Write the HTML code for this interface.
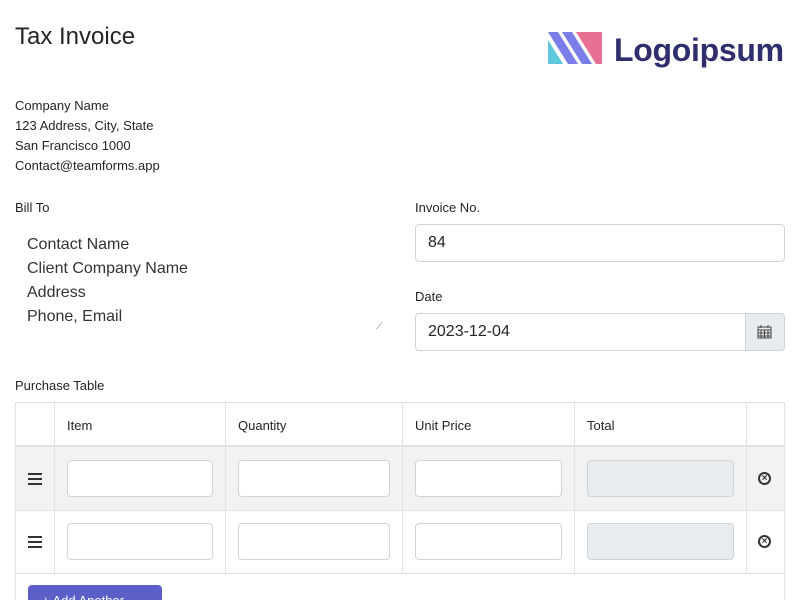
<!DOCTYPE html>
<html><head><style>
*{box-sizing:border-box;margin:0;padding:0}
html,body{width:800px;height:600px;overflow:hidden}
body{background:#fff;font-family:"Liberation Sans",sans-serif;color:#212529;position:relative}
.a{position:absolute}
.s{font-size:13px}
.inp{position:absolute;border:1px solid #ced4da;border-radius:4px;background:#fff;font-size:16px;padding-left:12px;line-height:35px}
.ri{position:absolute;height:37px;border:1px solid #ced4da;border-radius:4px;background:#fff}
.ham{position:absolute;width:14px;height:12px;border-top:2px solid #333;border-bottom:2px solid #333}
.ham:after{content:"";position:absolute;left:0;right:0;top:3px;border-top:2px solid #333}
.x{position:absolute;width:13px;height:13px;border:2px solid #333;border-radius:50%;font-size:10px;line-height:9px;text-align:center;font-weight:bold;color:#333}
</style></head><body>
<div class="a" style="left:15px;top:23px;font-size:24px">Tax Invoice</div>
<svg class="a" style="left:548px;top:32px" width="56" height="32" viewBox="0 0 56 32">
<polygon points="0,0 10,0 30,32 20,32" fill="#7b7de8"/>
<polygon points="0,8 15,32 0,32" fill="#5ec8dc"/>
<polygon points="14,0 24,0 44,32 34,32" fill="#7b7de8"/>
<polygon points="28,0 54,0 54,32 48,32" fill="#e86f94"/>
</svg>
<div class="a" style="left:614px;top:32px;font-size:32px;font-weight:bold;color:#2f2f6e;letter-spacing:-0.3px">Logoipsum</div>
<div class="a s" style="left:15px;top:96px;line-height:20px">Company Name<br>123 Address, City, State<br>San Francisco 1000<br>Contact@teamforms.app</div>
<div class="a s" style="left:15px;top:200px">Bill To</div>
<div class="a" style="left:27px;top:233px;font-size:16px;line-height:24px;color:#333">Contact Name<br>Client Company Name<br>Address<br>Phone, Email</div>
<div class="a" style="left:376px;top:321px;color:#777;font-size:9px">⟋</div>
<div class="a s" style="left:415px;top:200px">Invoice No.</div>
<div class="inp" style="left:415px;top:224px;width:370px;height:38px">84</div>
<div class="a s" style="left:415px;top:289px">Date</div>
<div class="inp" style="left:415px;top:313px;width:370px;height:38px">2023-12-04</div>
<div class="a" style="left:745px;top:313px;width:40px;height:38px;background:#e9ecef;border:1px solid #ced4da;border-radius:0 4px 4px 0"></div>
<svg class="a" style="left:757px;top:324px" width="15" height="15" viewBox="0 0 15 15" fill="none" stroke="#444" stroke-width="1"><rect x="1" y="3" width="13" height="11"/><path d="M1 6h13M1 9h13M1 12h13M4 6v8M7.5 6v8M11 6v8M4 1v3M11 1v3"/></svg>
<div class="a s" style="left:15px;top:378px">Purchase Table</div>
<div class="a" style="left:15px;top:402px;width:770px;height:198px;border:1px solid #dee2e6;border-bottom:0"></div>
<div class="a" style="left:16px;top:447px;width:768px;height:64px;background:#f2f2f2"></div>
<div class="a" style="left:15px;top:445px;width:770px;height:2px;background:#dee2e6"></div>
<div class="a" style="left:15px;top:510px;width:770px;height:1px;background:#dee2e6"></div>
<div class="a" style="left:15px;top:573px;width:770px;height:1px;background:#dee2e6"></div>
<div class="a" style="left:54px;top:402px;width:1px;height:172px;background:#dee2e6"></div>
<div class="a" style="left:225px;top:402px;width:1px;height:172px;background:#dee2e6"></div>
<div class="a" style="left:402px;top:402px;width:1px;height:172px;background:#dee2e6"></div>
<div class="a" style="left:574px;top:402px;width:1px;height:172px;background:#dee2e6"></div>
<div class="a" style="left:746px;top:402px;width:1px;height:172px;background:#dee2e6"></div>
<div class="a s" style="left:67px;top:418px">Item</div>
<div class="a s" style="left:238px;top:418px">Quantity</div>
<div class="a s" style="left:415px;top:418px">Unit Price</div>
<div class="a s" style="left:587px;top:418px">Total</div>
<div class="ham" style="left:28px;top:473px"></div>
<div class="ham" style="left:28px;top:536px"></div>
<div class="ri" style="left:67px;top:460px;width:146px"></div>
<div class="ri" style="left:238px;top:460px;width:152px"></div>
<div class="ri" style="left:415px;top:460px;width:147px"></div>
<div class="ri" style="left:587px;top:460px;width:147px;background:#e9ecef"></div>
<div class="ri" style="left:67px;top:523px;width:146px"></div>
<div class="ri" style="left:238px;top:523px;width:152px"></div>
<div class="ri" style="left:415px;top:523px;width:147px"></div>
<div class="ri" style="left:587px;top:523px;width:147px;background:#e9ecef"></div>
<div class="x" style="left:758px;top:472px">×</div>
<div class="x" style="left:758px;top:535px">×</div>
<div class="a" style="left:28px;top:585px;width:134px;height:15px;background:#5b5fc7;border-radius:4px 4px 0 0;overflow:hidden;color:#fff;font-size:13px;padding:8px 0 0 14px;line-height:15px">+ Add Another</div>
</body></html>
